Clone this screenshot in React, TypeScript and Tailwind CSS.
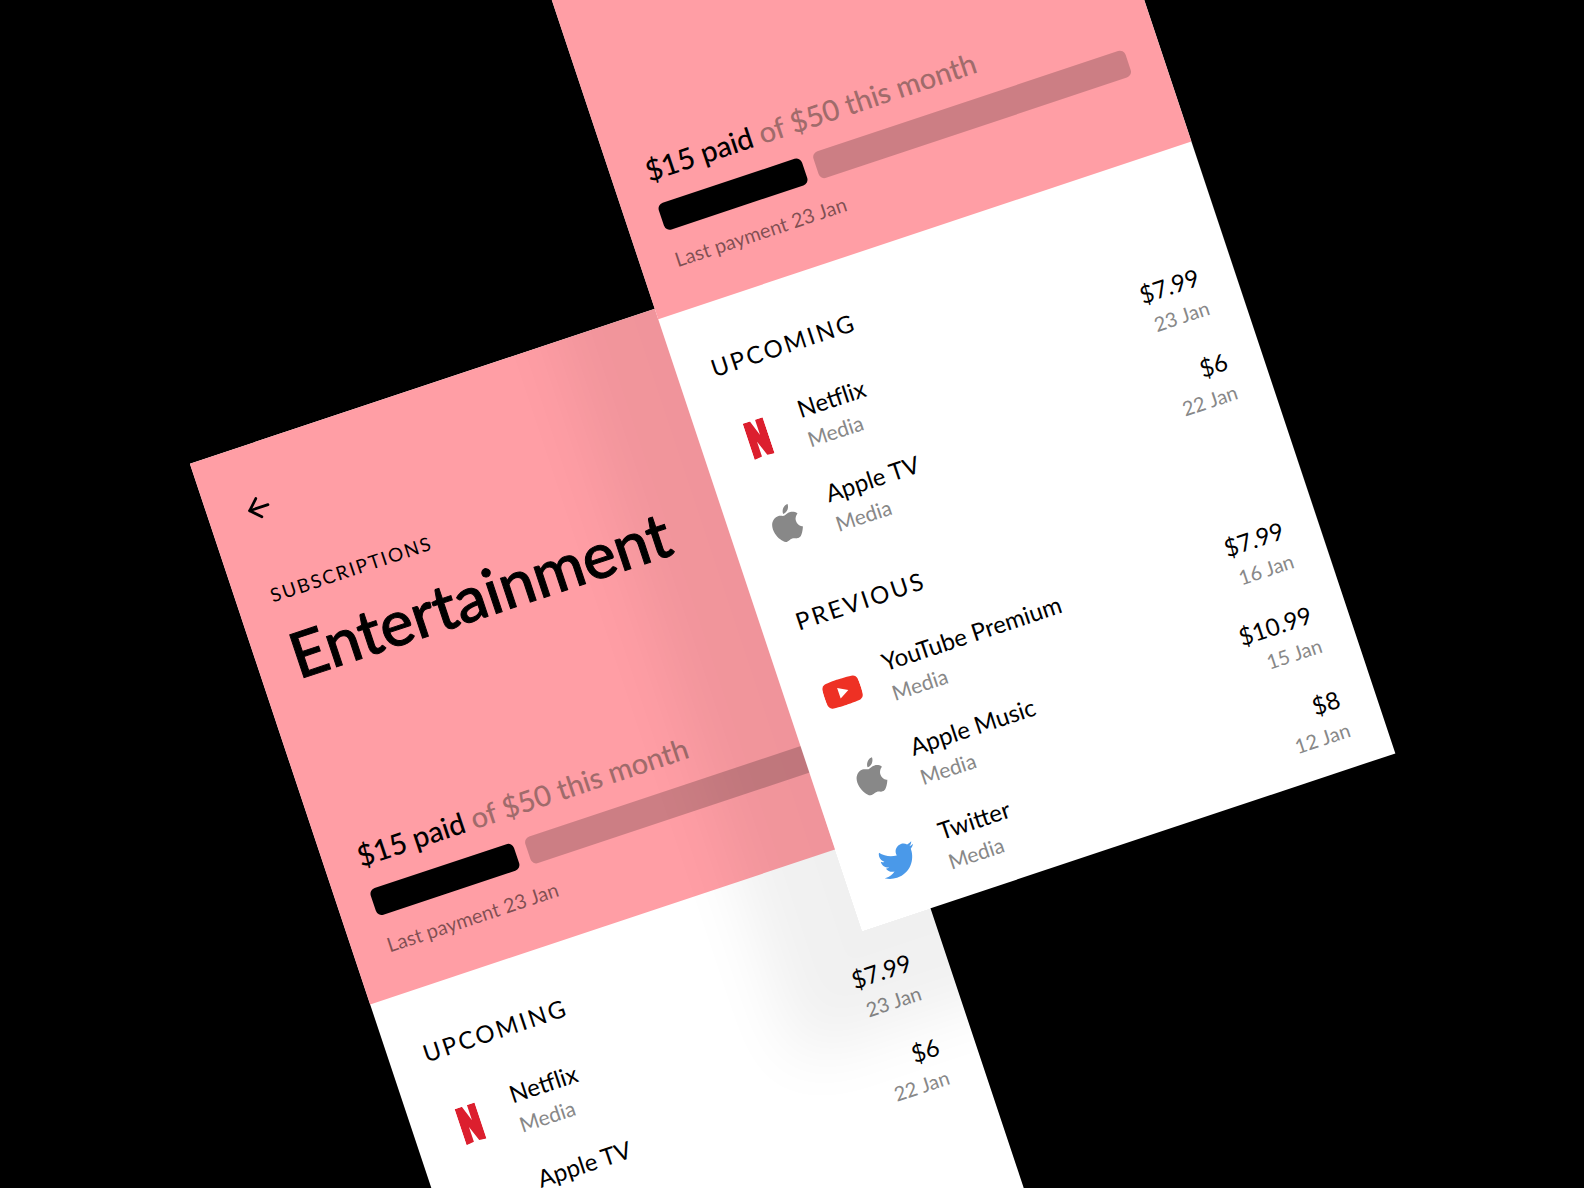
import type { ReactNode } from "react";
import { ArrowLeft } from "lucide-react";
import { FaTwitter } from "react-icons/fa";
import { SiApple, SiYoutube } from "react-icons/si";

type Payment = {
  name: string;
  category: string;
  price: string;
  date: string;
  icon: ReactNode;
};

type PaymentSectionProps = {
  title: string;
  payments: Payment[];
};

function NetflixIcon() {
  return (
    <svg viewBox="0 0 21 38" className="h-[38px] w-[21px]" fill="#dc1f2e">
      <path d="M0 0h7.6L13 16V0h8v38l-7.4-.9L8 21.5v15.6L0 38z" />
    </svg>
  );
}

const upcoming: Payment[] = [
  {
    name: "Netflix",
    category: "Media",
    price: "$7.99",
    date: "23 Jan",
    icon: <NetflixIcon />,
  },
  {
    name: "Apple TV",
    category: "Media",
    price: "$6",
    date: "22 Jan",
    icon: <SiApple size={36} className="text-[#888888]" />,
  },
];

const previous: Payment[] = [
  {
    name: "YouTube Premium",
    category: "Media",
    price: "$7.99",
    date: "16 Jan",
    icon: <SiYoutube size={38} className="text-[#ee3124]" />,
  },
  {
    name: "Apple Music",
    category: "Media",
    price: "$10.99",
    date: "15 Jan",
    icon: <SiApple size={36} className="text-[#888888]" />,
  },
  {
    name: "Twitter",
    category: "Media",
    price: "$8",
    date: "12 Jan",
    icon: <FaTwitter size={38} className="text-[#4a99e9]" />,
  },
];

function PaymentSection({ title, payments }: PaymentSectionProps) {
  return (
    <section className="pt-12">
      <h2 className="text-2xl leading-8 tracking-widest">{title}</h2>
      <ul className="mt-[34px] flex flex-col gap-[25px]">
        {payments.map((payment) => (
          <li key={payment.name} className="flex items-start">
            <span className="flex h-[62px] w-11 items-center justify-center">
              {payment.icon}
            </span>
            <div className="ml-[25px] flex-1">
              <p className="text-2xl leading-8">{payment.name}</p>
              <p className="text-[21px] leading-8 text-[#888888]">
                {payment.category}
              </p>
            </div>
            <div className="text-right">
              <p className="text-2xl leading-8">{payment.price}</p>
              <p className="text-xl leading-8 text-[#888888]">
                {payment.date}
              </p>
            </div>
          </li>
        ))}
      </ul>
    </section>
  );
}

function SubscriptionScreen() {
  return (
    <article className="w-[562px] bg-white text-black">
      <header className="bg-[#ff9ea5] px-[35px] pt-[47px] pb-[39px]">
        <button type="button" aria-label="Back" className="block">
          <ArrowLeft size={33} />
        </button>
        <p className="mt-[59px] text-[19px] leading-6 tracking-widest">
          SUBSCRIPTIONS
        </p>
        <h1 className="mt-4 text-[63px] leading-[72px] font-medium [-webkit-text-stroke:1px_black]">
          Entertainment
        </h1>
        <p className="mt-[157px] text-[29px] leading-9 font-medium">
          $15 paid <span className="text-[#a06b6b]">of $50 this month</span>
        </p>
        <div className="mt-[17px] flex h-7 gap-3">
          <div className="w-[151px] rounded-md bg-black" />
          <div className="flex-1 rounded-md bg-black/20" />
        </div>
        <p className="mt-[18px] text-xl leading-6 text-black/50">
          Last payment 23 Jan
        </p>
      </header>
      <div className="pr-9 pb-[22px] pl-[35px]">
        <PaymentSection title="UPCOMING" payments={upcoming} />
        <PaymentSection title="PREVIOUS" payments={previous} />
      </div>
    </article>
  );
}

export default function App() {
  return (
    <main className="relative h-screen overflow-hidden bg-black font-['Lato',sans-serif]">
      {/* Both screens sit on one tilted canvas pinned to the window's centre */}
      <div className="absolute top-1/2 left-1/2 size-0 -rotate-[18.435deg]">
        <div className="absolute top-[-314px] left-[-530px]">
          <SubscriptionScreen />
        </div>
        <div className="absolute top-[-873px] left-[-40px] shadow-[-102px_104px_64px_rgba(0,0,0,0.06)]">
          <SubscriptionScreen />
        </div>
      </div>
    </main>
  );
}
